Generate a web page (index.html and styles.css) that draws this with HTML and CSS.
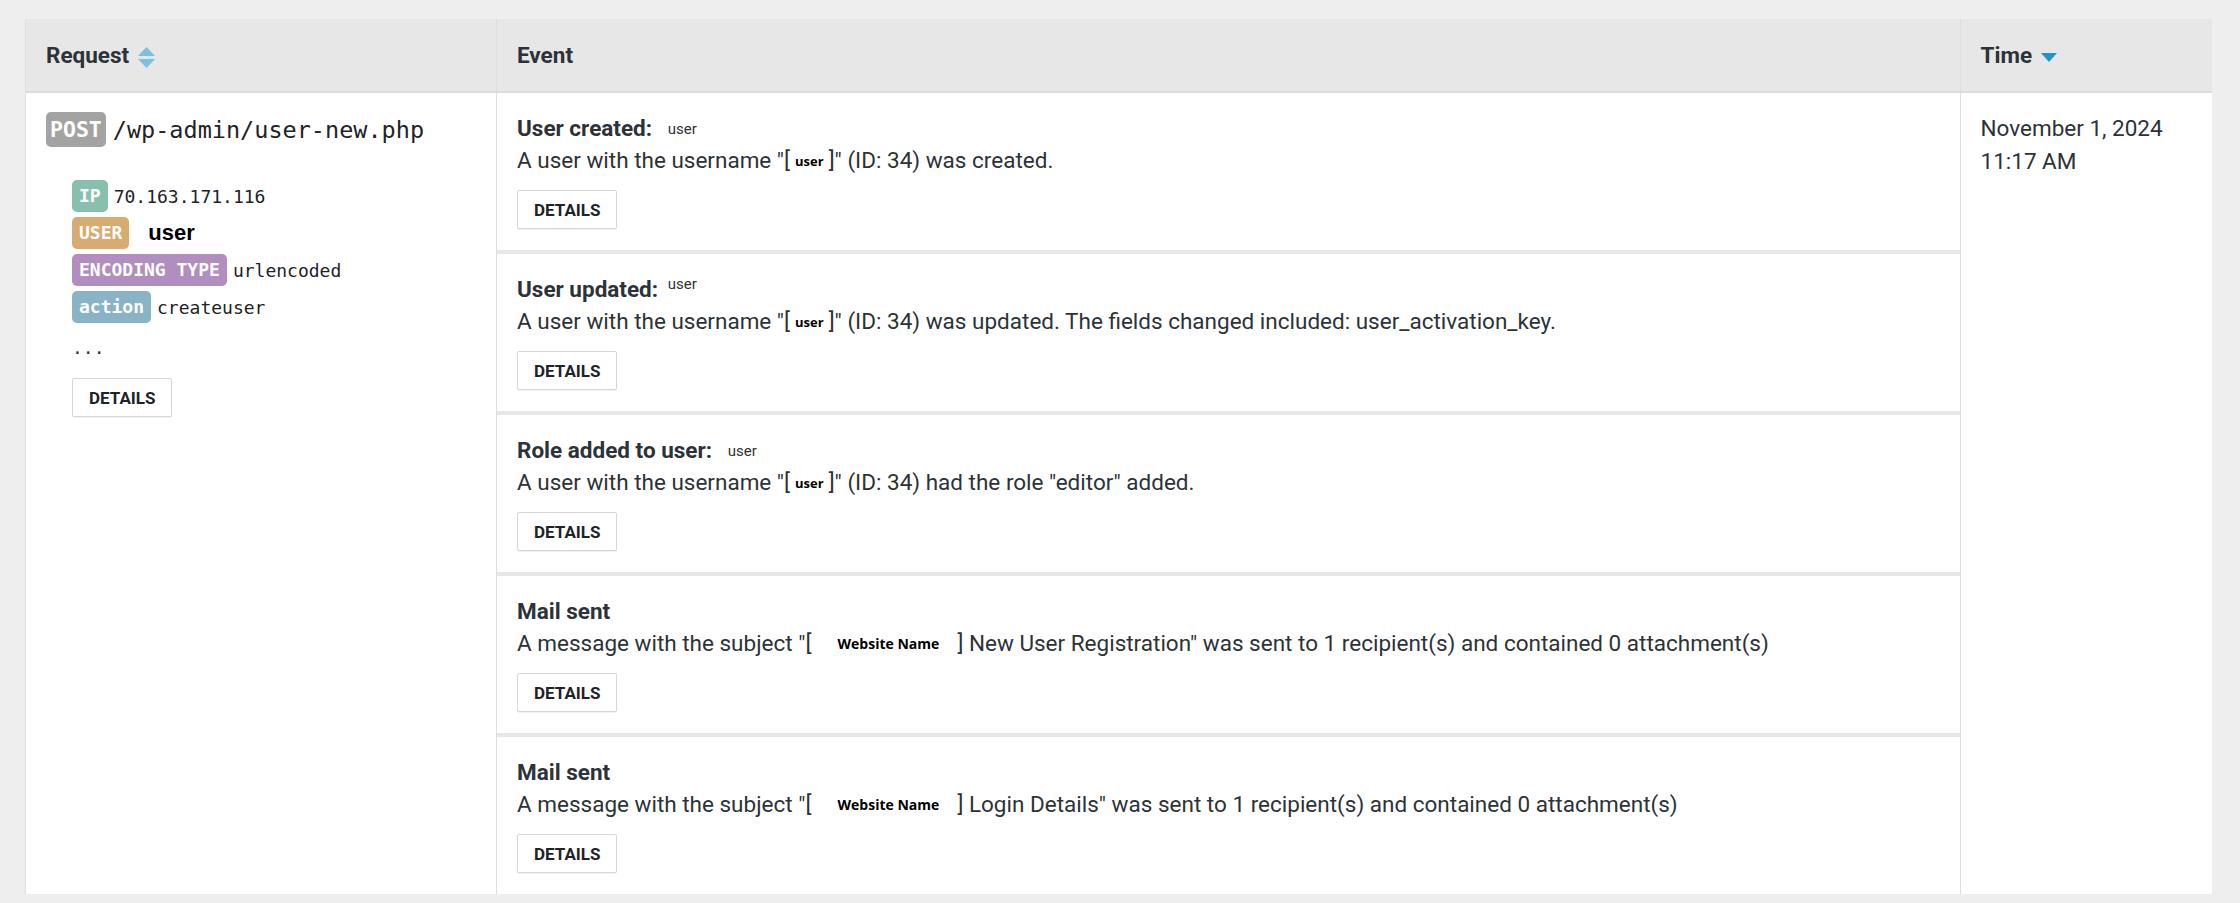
FILE: index.html
```html
<!DOCTYPE html>
<html lang="en">
<head>
  <meta charset="UTF-8">
  <meta name="viewport" content="width=device-width, initial-scale=1.0">
  <title>Request log</title>
  <link rel="stylesheet" href="styles.css">
</head>
<body>
  <div class="wrap">
    <table class="log">
      <colgroup>
        <col class="col-request">
        <col class="col-event">
        <col class="col-time">
      </colgroup>
      <thead>
        <tr>
          <th>Request
            <svg class="sort" width="17" height="21" viewBox="0 0 17 21"><path d="M8.5 0 L17 9 H0 Z M0 12 H17 L8.5 21 Z" fill="#7cc2e0"/></svg>
          </th>
          <th>Event</th>
          <th>Time
            <svg class="sort" width="16" height="9" viewBox="0 0 16 9"><path d="M0 0 H16 L8 9 Z" fill="#1e96c8"/></svg>
          </th>
        </tr>
      </thead>
      <tbody>
        <tr>
          <td class="request">
            <div class="req-line">
              <span class="method">POST</span>
              <span class="path">/wp-admin/user-new.php</span>
            </div>
            <ul class="params">
              <li><span class="tag tag-ip">IP</span><span class="val">70.163.171.116</span></li>
              <li><span class="tag tag-user">USER</span><span class="val-user">user</span></li>
              <li><span class="tag tag-enc">ENCODING TYPE</span><span class="val">urlencoded</span></li>
              <li><span class="tag tag-action">action</span><span class="val">createuser</span></li>
              <li class="more">...</li>
            </ul>
            <button class="btn btn-req">Details</button>
          </td>
          <td class="events">
            <div class="event">
              <div class="ev-title">User created: <span class="snip">user</span></div>
              <div class="ev-desc">A user with the username "[<span class="snip-b">user</span>]" (ID: 34) was created.</div>
              <button class="btn">Details</button>
            </div>
            <div class="event">
              <div class="ev-title">User updated: <span class="snip snip-up">user</span></div>
              <div class="ev-desc">A user with the username "[<span class="snip-b">user</span>]" (ID: 34) was updated. The fields changed included: user_activation_key.</div>
              <button class="btn">Details</button>
            </div>
            <div class="event">
              <div class="ev-title">Role added to user: <span class="snip">user</span></div>
              <div class="ev-desc">A user with the username "[<span class="snip-b">user</span>]" (ID: 34) had the role "editor" added.</div>
              <button class="btn">Details</button>
            </div>
            <div class="event">
              <div class="ev-title">Mail sent</div>
              <div class="ev-desc">A message with the subject "[<span class="snip-site">Website Name</span>] New User Registration" was sent to 1 recipient(s) and contained 0 attachment(s)</div>
              <button class="btn">Details</button>
            </div>
            <div class="event">
              <div class="ev-title">Mail sent</div>
              <div class="ev-desc">A message with the subject "[<span class="snip-site">Website Name</span>] Login Details" was sent to 1 recipient(s) and contained 0 attachment(s)</div>
              <button class="btn">Details</button>
            </div>
          </td>
          <td class="time">
            November 1, 2024<br>
            11:17 AM
          </td>
        </tr>
      </tbody>
    </table>
  </div>
</body>
</html>
```

FILE: styles.css
```css
body {
  margin: 0;
  background: #eeeeee;
  font-family: Roboto, "Liberation Sans", sans-serif;
  color: #2c3338;
}
.wrap {
  padding: 19px 28px 0 25px;
}
.log {
  width: 100%;
  border-collapse: collapse;
  table-layout: fixed;
  background: #fff;
  border-left: 1px solid #e0e0e0;
}
.col-request { width: 471px; }
.col-time { width: 252px; }

.log th {
  height: 72px;
  padding: 0 20px;
  background: #e7e7e7;
  border-bottom: 2px solid #dcdcdc;
  border-left: 1px solid #dddddd;
  text-align: left;
  font-size: 22.5px;
  font-weight: 700;
  vertical-align: middle;
}
.log th:first-child { border-left: none; }
.sort {
  margin-left: 3px;
  vertical-align: middle;
}
.log td {
  vertical-align: top;
  border-left: 1px solid #dddddd;
}
.log td:first-child { border-left: none; }

/* request column */
.request {
  padding: 19px 20px;
}
.req-line {
  display: flex;
  align-items: center;
  gap: 7px;
}
.method {
  background: #a3a3a3;
  color: #fff;
  font-family: "DejaVu Sans Mono", monospace;
  font-weight: 700;
  font-size: 21.5px;
  line-height: 35px;
  padding: 0 4px;
  border-radius: 5px;
}
.path {
  font-family: "DejaVu Sans Mono", monospace;
  font-size: 23.5px;
  color: #1d2327;
}
.params {
  list-style: none;
  margin: 33px 0 0 26px;
  padding: 0;
  display: flex;
  flex-direction: column;
  gap: 5px;
}
.params li {
  display: flex;
  align-items: center;
  gap: 6px;
  height: 32px;
}
.tag {
  color: #fff;
  font-family: "DejaVu Sans Mono", monospace;
  font-weight: 700;
  font-size: 18px;
  line-height: 32px;
  padding: 0 7px;
  border-radius: 5px;
}
.tag-ip { background: #88c0b0; }
.tag-user { background: #d8ab70; }
.tag-enc { background: #b28dbf; }
.tag-action { background: #88b4c6; }
.val {
  font-family: "DejaVu Sans Mono", monospace;
  font-size: 18px;
  color: #1d2327;
}
.val-user {
  margin-left: 13px;
  font-family: "Liberation Sans", sans-serif;
  font-weight: 700;
  font-size: 22px;
  color: #000;
}
.params .more {
  font-family: "DejaVu Sans Mono", monospace;
  font-size: 18px;
  height: 30px;
  align-items: flex-end;
}
.btn-req {
  margin: 20px 0 0 26px;
}

/* buttons */
.btn {
  display: block;
  height: 39px;
  padding: 0 16px;
  background: #fff;
  border: 1px solid #d6d6d6;
  border-radius: 2px;
  box-shadow: 0 1px 1px rgba(0, 0, 0, 0.06);
  font-family: Roboto, sans-serif;
  font-size: 17px;
  font-weight: 700;
  text-transform: uppercase;
  color: #1d2327;
  cursor: pointer;
}

/* event column */
.events {
  padding: 0;
}
.event {
  padding: 19px 20px 21px;
}
.event + .event {
  border-top: 4px solid #e6e6e6;
}
.ev-title {
  font-size: 22.5px;
  font-weight: 700;
  line-height: 32px;
}
.ev-desc {
  font-size: 22.5px;
  line-height: 32px;
  margin-bottom: 14px;
}
.snip {
  display: inline-block;
  margin-left: 10px;
  font-size: 15px;
  line-height: 16px;
  font-weight: 400;
  color: #333;
  vertical-align: 2px;
}
.snip-up {
  margin-left: 4px;
  vertical-align: 8px;
}
.snip-b {
  display: inline-block;
  padding: 0 5px;
  background: #fff;
  font-family: "Open Sans", sans-serif;
  font-size: 13px;
  line-height: 16px;
  font-weight: 700;
  color: #000;
  vertical-align: 2px;
}
.snip-site {
  display: inline-block;
  width: 138px;
  padding-left: 8px;
  text-align: center;
  font-family: "Open Sans", sans-serif;
  font-size: 14px;
  line-height: 16px;
  font-weight: 700;
  color: #000;
  vertical-align: 2px;
}

/* time column */
.time {
  padding: 19px 20px;
  font-size: 22.5px;
  line-height: 33px;
}
```
